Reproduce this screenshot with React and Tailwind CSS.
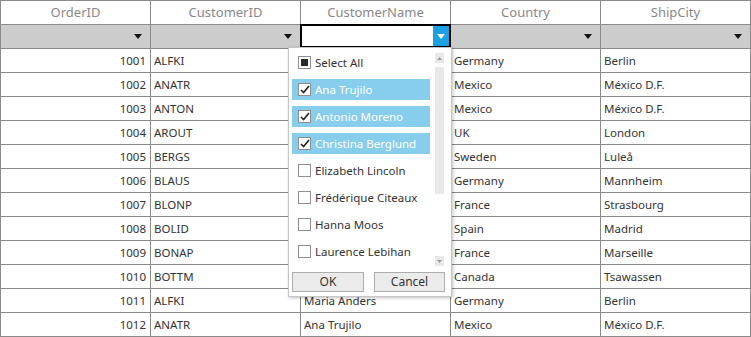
import React from 'react';

const columns = ['OrderID', 'CustomerID', 'CustomerName', 'Country', 'ShipCity'];

// names of rows 1001-1010 sit under the filter popup, so they are left blank
const orders = [
  [1001, 'ALFKI', '', 'Germany', 'Berlin'],
  [1002, 'ANATR', '', 'Mexico', 'México D.F.'],
  [1003, 'ANTON', '', 'Mexico', 'México D.F.'],
  [1004, 'AROUT', '', 'UK', 'London'],
  [1005, 'BERGS', '', 'Sweden', 'Luleå'],
  [1006, 'BLAUS', '', 'Germany', 'Mannheim'],
  [1007, 'BLONP', '', 'France', 'Strasbourg'],
  [1008, 'BOLID', '', 'Spain', 'Madrid'],
  [1009, 'BONAP', '', 'France', 'Marseille'],
  [1010, 'BOTTM', '', 'Canada', 'Tsawassen'],
  [1011, 'ALFKI', 'Maria Anders', 'Germany', 'Berlin'],
  [1012, 'ANATR', 'Ana Trujilo', 'Mexico', 'México D.F.'],
];

const filterItems = [
  { name: 'Ana Trujilo', checked: true },
  { name: 'Antonio Moreno', checked: true },
  { name: 'Christina Berglund', checked: true },
  { name: 'Elizabeth Lincoln', checked: false },
  { name: 'Frédérique Citeaux', checked: false },
  { name: 'Hanna Moos', checked: false },
  { name: 'Laurence Lebihan', checked: false },
];

function Triangle({ color = '#111' }) {
  return (
    <svg width="8" height="5" viewBox="0 0 8 5">
      <path d="M0 0 L8 0 L4 5 Z" fill={color} />
    </svg>
  );
}

function CheckBox({ state }) {
  return (
    <span className="w-[13px] h-[13px] shrink-0 border border-[#8f8f8f] bg-white flex items-center justify-center">
      {state === 'checked' && (
        <svg width="10" height="9" viewBox="0 0 10 9">
          <path d="M1 5 L3.6 7.6 L9 1" fill="none" stroke="#222" strokeWidth="1.6" />
        </svg>
      )}
      {state === 'partial' && <span className="w-[7px] h-[7px] bg-[#2b2b2b]" />}
    </span>
  );
}

function FilterPopup() {
  return (
    <div className="absolute left-[288px] top-[47px] w-[164px] h-[250px] bg-white border border-[#c6c6c6] shadow-[1px_1px_3px_rgba(0,0,0,0.25)] flex flex-col">
      <div className="flex h-[218px] pt-[4px]">
        <div className="w-[138px] ml-[3px] h-[213px] overflow-hidden flex flex-col gap-[6px]">
          <div className="h-[21px] shrink-0 flex items-center gap-[4px] pl-[6px] text-[#333]">
            <CheckBox state="partial" />
            <span>Select All</span>
          </div>
          {filterItems.map(item => (
            <div
              key={item.name}
              className={
                item.checked
                  ? 'h-[21px] shrink-0 flex items-center gap-[4px] pl-[6px] bg-[#87ceec] text-white'
                  : 'h-[21px] shrink-0 flex items-center gap-[4px] pl-[6px] text-[#333]'
              }
            >
              <CheckBox state={item.checked ? 'checked' : 'none'} />
              <span>{item.name}</span>
            </div>
          ))}
        </div>
        {/* scrollbar */}
        <div className="ml-[5px] w-[9px] h-[213px] mt-[1px] flex flex-col">
          <div className="h-[10px] bg-[#e8e8e8] flex items-center justify-center">
            <svg width="5" height="3" viewBox="0 0 5 3"><path d="M0 3 L5 3 L2.5 0 Z" fill="#9a9a9a" /></svg>
          </div>
          <div className="h-[127px] mt-[4px] bg-[#e8e8e8]" />
          <div className="flex-1" />
          <div className="h-[10px] bg-[#e8e8e8] flex items-center justify-center">
            <svg width="5" height="3" viewBox="0 0 5 3"><path d="M0 0 L5 0 L2.5 3 Z" fill="#9a9a9a" /></svg>
          </div>
        </div>
      </div>
      <div className="flex gap-[10px] pl-[3px] mt-[6px]">
        <button className="w-[72px] h-[20px] bg-[#ebebeb] border border-[#adadad] text-[#333] text-[12px] leading-none">OK</button>
        <button className="w-[71px] h-[20px] bg-[#ebebeb] border border-[#adadad] text-[#333] text-[12px] leading-none">Cancel</button>
      </div>
    </div>
  );
}

export default function App() {
  return (
    <div className="relative w-[751px] h-[337px] bg-white font-['Segoe_UI','Noto_Sans',sans-serif] text-[11.5px] overflow-hidden">
      <div className="grid grid-cols-[repeat(5,150px)] border-l border-t border-[#8a8a8a] w-[751px]">
        {columns.map(col => (
          <div key={col} className="h-[24px] border-r border-b border-[#8a8a8a] flex items-center justify-center text-[13px] text-[#888]">
            {col}
          </div>
        ))}
        {columns.map(col => (
          <div key={col + '-filter'} className="h-[24px] border-r border-b border-[#8a8a8a] bg-[#cccccc] flex items-center justify-end pr-[8px]">
            <Triangle />
          </div>
        ))}
        {orders.map(row =>
          row.map((val, i) => (
            <div
              key={row[0] + '-' + i}
              className={
                i === 0
                  ? 'h-[24px] border-r border-b border-[#8a8a8a] flex items-center justify-end pr-[4px] text-[#333]'
                  : 'h-[24px] border-r border-b border-[#8a8a8a] flex items-center pl-[3px] text-[#333] whitespace-nowrap overflow-hidden'
              }
            >
              {val}
            </div>
          ))
        )}
      </div>

      {/* active filter editor */}
      <div className="absolute left-[300px] top-[24px] w-[151px] h-[24px] border-2 border-black bg-white flex justify-end">
        <div className="w-[16px] h-full bg-[#1ba1e2] flex items-center justify-center">
          <Triangle color="#fff" />
        </div>
      </div>

      <FilterPopup />
    </div>
  );
}
